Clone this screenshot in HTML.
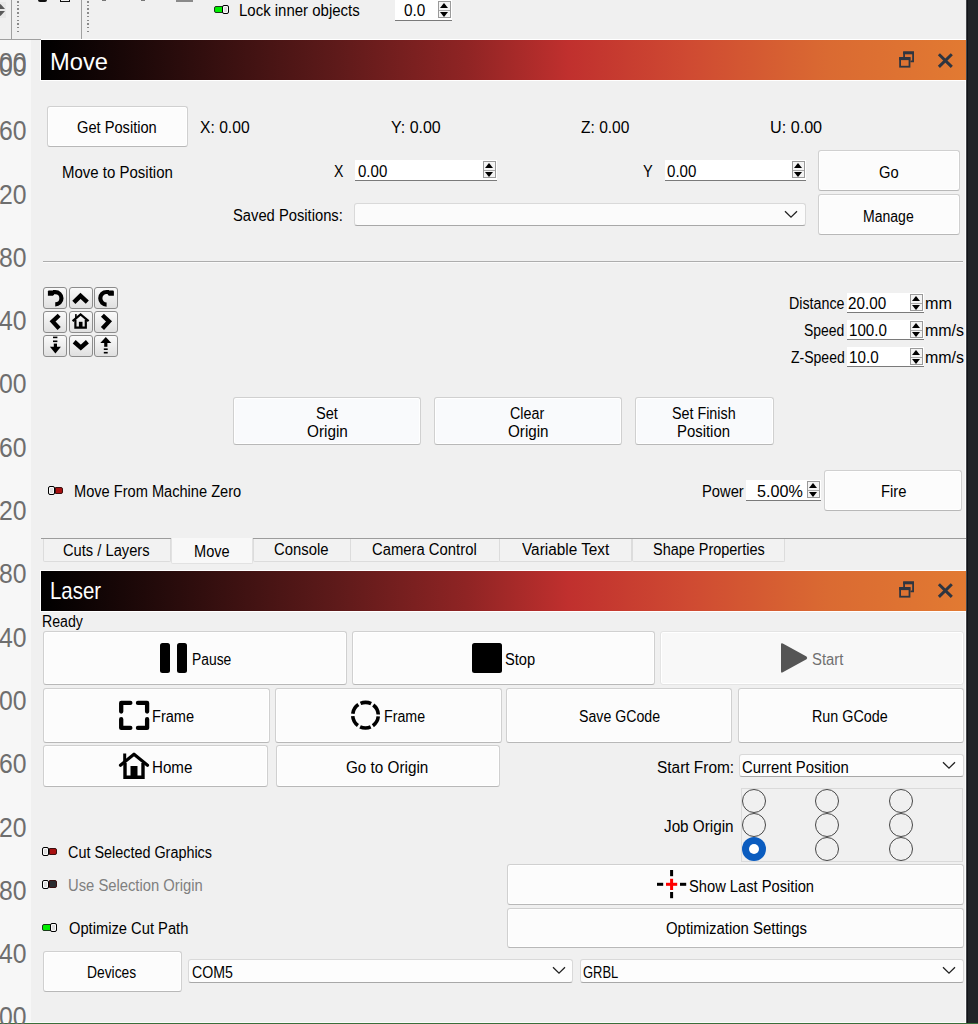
<!DOCTYPE html>
<html><head><meta charset="utf-8">
<style>
*{margin:0;padding:0;box-sizing:border-box}
html,body{width:978px;height:1024px;overflow:hidden;background:#f0f0f0;font-family:"Liberation Sans",sans-serif;color:#000}
.a{position:absolute}
.t{position:absolute;white-space:nowrap;line-height:1;transform-origin:0 0}
.btn{position:absolute;background:#fcfcfc;border:1px solid #d0d0d0;border-bottom-color:#b8b8b8;border-radius:3px;box-shadow:inset 0 0 0 1px #fff}
.title{position:absolute;left:41px;width:925px;height:40px;background:linear-gradient(90deg,#000 0%,#2a0c0c 15%,#5e1a1a 32%,#8f2424 46%,#c0302e 57%,#cf4a32 70%,#da6a32 85%,#e27a32 100%)}
.spin{position:absolute;background:#fff;border-bottom:1px solid #7a7a7a}
.sb{position:absolute;width:13px;height:17px;border:1px solid #9a9a9a;background:#f4f4f4}
.sb:before{content:"";position:absolute;left:0.8px;top:1.1px;border-left:4.7px solid transparent;border-right:4.7px solid transparent;border-bottom:5.8px solid #000}
.sb:after{content:"";position:absolute;left:0.8px;top:9.6px;border-left:4.7px solid transparent;border-right:4.7px solid transparent;border-top:5.8px solid #000}
.sb i{position:absolute;left:0;right:0;top:7.8px;height:1px;background:#a8a8a8}
.combo{position:absolute;background:#fbfbfb;border:1px solid #d9d9d9;border-bottom-color:#a8a8a8;border-radius:3px}
.chev{position:absolute;width:14px;height:9px}
.jb{position:absolute;width:23.5px;height:21.5px;border:1px solid #8c8c8c;border-radius:3px;background:linear-gradient(180deg,#fafafa,#e0e0e0)}
.jb svg{position:absolute;left:-1px;top:-1px}
.rul{position:absolute;right:951px;color:#6e6e6e;font-size:27.5px;line-height:1;transform-origin:100% 0;transform:scaleX(0.9)}
.tab{position:absolute;top:539px;height:23px;background:#f2f2f2;border:1px solid #dcdcdc;border-top:0;border-radius:0 0 2px 2px}
</style></head><body>
<div class="a" style="left:0;top:40px;width:31px;height:984px;background:#f7f7f7"></div>
<div class="a" style="left:966px;top:0;width:12px;height:1024px;background:#222529"></div>
<div class="a" style="left:966px;top:0;width:1px;height:1024px;background:#45474b"></div><div class="a" style="left:967px;top:0;width:1px;height:1024px;background:#121418"></div>
<div class="a" style="left:965px;top:40px;width:1px;height:982px;background:#fbfbfb"></div>
<div class="a" style="left:0;top:1022px;width:966px;height:1px;background:rgba(255,255,255,0.7)"></div>
<div class="a" style="left:0;top:1023px;width:978px;height:1px;background:#3a6e3a"></div>
<div class="rul" style="top:49px">00</div><div class="rul" style="top:52.5px">00</div>
<div class="rul" style="top:117.2px">60</div>
<div class="rul" style="top:180.5px">20</div>
<div class="rul" style="top:243.8px">80</div>
<div class="rul" style="top:307.1px">40</div>
<div class="rul" style="top:370.4px">00</div>
<div class="rul" style="top:433.7px">60</div>
<div class="rul" style="top:497.0px">20</div>
<div class="rul" style="top:560.3px">80</div>
<div class="rul" style="top:623.6px">40</div>
<div class="rul" style="top:686.9px">00</div>
<div class="rul" style="top:750.2px">60</div>
<div class="rul" style="top:813.5px">20</div>
<div class="rul" style="top:876.8px">80</div>
<div class="rul" style="top:940.1px">40</div>
<div class="rul" style="top:1003.4px">00</div>
<div class="a" style="left:0;top:39px;width:41px;height:1px;background:#a0a0a0"></div>
<div class="a" style="left:41px;top:39px;width:925px;height:1px;background:#fff"></div>
<div class="a" style="left:11px;top:0;width:1px;height:39px;background:#a0a0a0"></div>
<div class="a" style="left:81px;top:0;width:1px;height:39px;background:#a0a0a0"></div>
<div class="a" style="left:17px;top:1px;width:2px;height:33px;background:repeating-linear-gradient(180deg,#8a8a8a 0 1.5px,transparent 1.5px 3.7px)"></div>
<div class="a" style="left:87px;top:1px;width:2px;height:33px;background:repeating-linear-gradient(180deg,#8a8a8a 0 1.5px,transparent 1.5px 3.7px)"></div>
<div class="a" style="left:0;top:2px;width:6px;height:16px;background:#e8e8e8"></div>
<svg class="a" style="left:-4px;top:3px" width="10" height="15"><path d="M0 6 L4.5 1 L9 6 Z M0 8 L9 8 L4.5 13 Z" fill="#5a5a5a"/></svg>
<div class="a" style="left:38px;top:0;width:9px;height:1.5px;background:#111;border-radius:0 0 4px 4px"></div>
<div class="a" style="left:60px;top:0;width:10px;height:2px;border:1.3px solid #111;border-top:0"></div>
<div class="a" style="left:102px;top:0;width:4px;height:1px;background:#777"></div>
<div class="a" style="left:141px;top:0;width:4px;height:1px;background:#777"></div>
<div class="a" style="left:176px;top:0;width:17px;height:1.5px;background:#8a8a8a"></div>
<div class="a" style="left:214px;top:5.5px;width:8.5px;height:7.5px;background:#00ee00;border:1px solid #1a3a1a;border-radius:2px 0 0 2px"></div>
<div class="a" style="left:221.5px;top:4.7px;width:7.3px;height:9.2px;background:#dedede;border:1.5px solid #000;border-radius:2px;box-shadow:inset 0 0 0 1px #fafafa"></div>
<div class="spin" style="left:395px;top:0;width:57px;height:21px"></div>
<div class="sb" style="left:438px;top:1px;height:17px"><i></i></div>
<div class="title" style="top:40px"></div>
<div class="a" style="left:40px;top:80px;width:926px;height:1px;background:#fff"></div><div class="a" style="left:40px;top:40px;width:1px;height:40px;background:#fff"></div>
<div class="btn" style="left:47px;top:106px;width:141px;height:41px"></div>
<div class="spin" style="left:355px;top:160px;width:142px;height:21px"></div>
<div class="sb" style="left:483px;top:161px"><i></i></div>
<div class="spin" style="left:665px;top:160px;width:141px;height:21px"></div>
<div class="sb" style="left:792px;top:161px"><i></i></div>
<div class="btn" style="left:818px;top:150px;width:142px;height:41px"></div>
<div class="combo" style="left:354px;top:203px;width:452px;height:23px"></div>
<svg class="a" style="left:784px;top:210px" width="14" height="9" viewBox="0 0 14 9"><path d="M1 1.2 L7 7.2 L13 1.2" fill="none" stroke="#222" stroke-width="1.3"/></svg>
<div class="btn" style="left:818px;top:194px;width:142px;height:41px"></div>
<div class="a" style="left:43px;top:260.5px;width:920px;height:1.2px;background:#adadad"></div>
<div class="a" style="left:43px;top:261.7px;width:920px;height:1px;background:#fafafa"></div>
<div class="jb" style="left:43px;top:287px"><svg width="24" height="22" viewBox="0 0 24 22"><path d="M12.25 17.45 A6.2 6.2 0 0 0 12.25 5.05 H10" fill="none" stroke="#000" stroke-width="4.2"/><path d="M4.9 4.4 L5.5 3.5 H11 V7.6 L10 8.7 H4.9 Z" fill="#000"/></svg></div>
<div class="jb" style="left:69px;top:287px"><svg width="24" height="22" viewBox="0 0 24 22"><path d="M4.85 15.35 L11.5 8.9 L18.3 15.1" fill="none" stroke="#000" stroke-width="4.5"/></svg></div>
<div class="jb" style="left:94px;top:287px"><svg width="24" height="22" viewBox="0 0 24 22"><path d="M12.6 17.6 A6.3 6.3 0 0 1 12.6 5.0 H15" fill="none" stroke="#000" stroke-width="4.2"/><path d="M19.9 4.4 L19.3 3.5 H13.8 V7.6 L14.8 8.7 H19.9 Z" fill="#000"/></svg></div>
<div class="jb" style="left:43px;top:311px"><svg width="24" height="22" viewBox="0 0 24 22"><path d="M16.15 4.3 L9.6 10.4 L16.15 17.5" fill="none" stroke="#000" stroke-width="4.3"/></svg></div>
<div class="jb" style="left:69px;top:311px"><svg width="24" height="22" viewBox="0 0 24 22"><path d="M3.6 10.2 L11.6 3.4 L19.6 10.2" fill="none" stroke="#000" stroke-width="2.2"/><rect x="6.1" y="3.1" width="1.6" height="4.5" fill="#000"/><path d="M6.4 8.8 V16.6 H16.8 V8.8" fill="none" stroke="#000" stroke-width="2.2"/><rect x="9.9" y="10.8" width="3.6" height="6" fill="#000"/></svg></div>
<div class="jb" style="left:94px;top:311px"><svg width="24" height="22" viewBox="0 0 24 22"><path d="M8.45 4.3 L15.0 10.4 L8.45 17.5" fill="none" stroke="#000" stroke-width="4.3"/></svg></div>
<div class="jb" style="left:43px;top:335px"><svg width="24" height="22" viewBox="0 0 24 22"><rect x="10" y="1.6" width="4.4" height="1.6" fill="#000"/><rect x="10" y="5.5" width="4.4" height="1.6" fill="#000"/><rect x="10.8" y="8.6" width="3.2" height="3.6" fill="#000"/><path d="M6.9 11.8 H17.9 L12.4 18.5 Z" fill="#000"/></svg></div>
<div class="jb" style="left:69px;top:335px"><svg width="24" height="22" viewBox="0 0 24 22"><path d="M5.2 6.8 L11.8 12.6 L18.4 6.8" fill="none" stroke="#000" stroke-width="4.5"/></svg></div>
<div class="jb" style="left:94px;top:335px"><svg width="24" height="22" viewBox="0 0 24 22"><path d="M6.3 7.9 H17.3 L11.8 2 Z" fill="#000"/><rect x="10.2" y="7.6" width="3.2" height="4.2" fill="#000"/><rect x="9.8" y="13.4" width="3.9" height="1.6" fill="#000"/><rect x="9.8" y="16.9" width="3.9" height="1.6" fill="#000"/></svg></div>
<div class="spin" style="left:847px;top:293px;width:77px;height:20px"></div>
<div class="sb" style="left:910px;top:294px"><i></i></div>
<div class="spin" style="left:847px;top:320px;width:77px;height:20px"></div>
<div class="sb" style="left:910px;top:321px"><i></i></div>
<div class="spin" style="left:847px;top:347px;width:77px;height:20px"></div>
<div class="sb" style="left:910px;top:348px"><i></i></div>
<div class="btn" style="left:233px;top:397px;width:188px;height:48px;background:#f9fafc"></div>
<div class="btn" style="left:434px;top:397px;width:188px;height:48px;background:#f9fafc"></div>
<div class="btn" style="left:635px;top:397px;width:139px;height:48px;background:#f9fafc"></div>
<div class="a" style="left:54.5px;top:486.7px;width:8.5px;height:7.5px;background:#a81010;border:1px solid #3a1010;border-radius:0 2px 2px 0"></div>
<div class="a" style="left:48px;top:485.9px;width:7px;height:9.2px;background:#dedede;border:1.5px solid #000;border-radius:2px;box-shadow:inset 0 0 0 1px #fafafa"></div>
<div class="spin" style="left:746px;top:480px;width:75px;height:21px"></div>
<div class="sb" style="left:807px;top:481px"><i></i></div>
<div class="btn" style="left:824px;top:470px;width:138px;height:41px"></div>
<div class="a" style="left:41px;top:538px;width:925px;height:1px;background:#9c9c9c"></div>
<div class="tab" style="left:43px;width:128px"></div>
<div class="tab" style="left:253px;width:98px"></div>
<div class="tab" style="left:350px;width:150px"></div>
<div class="tab" style="left:499px;width:133px"></div>
<div class="tab" style="left:632px;width:153px"></div>
<div class="a" style="left:171px;top:538px;width:82px;height:26px;background:#f8f8f8;border:1px solid #e2e2e2;border-top:0;border-radius:0 0 2px 2px"></div>
<div class="a" style="left:40px;top:570px;width:926px;height:42px;background:#fff"></div>
<div class="title" style="top:571px"></div>
<div class="btn" style="left:43px;top:631px;width:304px;height:54px"></div>
<div class="a" style="left:160px;top:643px;width:10px;height:30px;background:#000;border-radius:2.5px"></div>
<div class="a" style="left:177px;top:643px;width:10px;height:30px;background:#000;border-radius:2.5px"></div>
<div class="btn" style="left:352px;top:631px;width:303px;height:54px"></div>
<div class="a" style="left:472px;top:643px;width:29.5px;height:30px;background:#000;border-radius:2.5px"></div>
<div class="btn" style="left:660px;top:631px;width:304px;height:54px;background:#f8f8f8;border-color:#e4e4e4"></div>
<svg class="a" style="left:780px;top:642px" width="29" height="32" viewBox="0 0 29 32"><path d="M1 2.5 Q1 0.5 2.8 1.5 L26.5 14.5 Q28 15.9 26.5 17.3 L2.8 30.3 Q1 31.3 1 29.3 Z" fill="#555"/></svg>
<div class="btn" style="left:43px;top:688px;width:227px;height:55px"></div>
<svg class="a" style="left:118px;top:700px" width="32" height="31" viewBox="0 0 32 31"><path d="M3.2 11.6 V2.9 H12.35 M19.95 2.9 H29.1 V11.6 M29.1 19.2 V27.9 H19.95 M12.35 27.9 H3.2 V19.2" fill="none" stroke="#000" stroke-width="4.3" stroke-linecap="round" stroke-linejoin="round"/></svg>
<div class="btn" style="left:275px;top:688px;width:227px;height:55px"></div>
<svg class="a" style="left:350px;top:700px" width="31" height="31" viewBox="0 0 31 31"><circle cx="15.5" cy="15.2" r="12.8" fill="none" stroke="#000" stroke-width="3.6" stroke-dasharray="10.9 2.5" stroke-dashoffset="-1.25"/></svg>
<div class="btn" style="left:506px;top:688px;width:226px;height:55px"></div>
<div class="btn" style="left:738px;top:688px;width:226px;height:55px"></div>
<div class="btn" style="left:43px;top:745px;width:225px;height:42px"></div>
<svg class="a" style="left:118px;top:752px" width="32" height="28" viewBox="0 0 32 28"><path d="M2.5 13.2 L16 2.2 L29.5 13.2" fill="none" stroke="#000" stroke-width="3.2" stroke-linecap="round" stroke-linejoin="round"/><rect x="5.2" y="1.5" width="3" height="9" fill="#000"/><path d="M7 11 V25.3 H25 V11" fill="none" stroke="#000" stroke-width="3.4"/><rect x="12.5" y="14" width="7" height="12" fill="#000"/></svg>
<div class="btn" style="left:276px;top:745px;width:224px;height:42px"></div>
<div class="combo" style="left:739px;top:754px;width:225px;height:23px;background:#fdfdfd"></div>
<svg class="a" style="left:942px;top:761px" width="14" height="9" viewBox="0 0 14 9"><path d="M1 1.2 L7 7.2 L13 1.2" fill="none" stroke="#222" stroke-width="1.3"/></svg>
<div class="a" style="left:741px;top:788px;width:222px;height:74px;border:1px solid #dadada"></div>
<div class="a" style="left:742px;top:788.5px;width:24px;height:24px;border-radius:50%;border:1.8px solid #474747"></div>
<div class="a" style="left:815px;top:788.5px;width:24px;height:24px;border-radius:50%;border:1.8px solid #474747"></div>
<div class="a" style="left:889px;top:788.5px;width:24px;height:24px;border-radius:50%;border:1.8px solid #474747"></div>
<div class="a" style="left:742px;top:813px;width:24px;height:24px;border-radius:50%;border:1.8px solid #474747"></div>
<div class="a" style="left:815px;top:813px;width:24px;height:24px;border-radius:50%;border:1.8px solid #474747"></div>
<div class="a" style="left:889px;top:813px;width:24px;height:24px;border-radius:50%;border:1.8px solid #474747"></div>
<div class="a" style="left:742px;top:837.3px;width:24px;height:24px;border-radius:50%;background:#0b5cbf"><div class="a" style="left:7px;top:7px;width:10px;height:10px;border-radius:50%;background:#fff"></div></div>
<div class="a" style="left:815px;top:837.3px;width:24px;height:24px;border-radius:50%;border:1.8px solid #474747"></div>
<div class="a" style="left:889px;top:837.3px;width:24px;height:24px;border-radius:50%;border:1.8px solid #474747"></div>
<div class="a" style="left:48.5px;top:847.5999999999999px;width:8.5px;height:7.5px;background:#a81010;border:1px solid #3a1010;border-radius:0 2px 2px 0"></div>
<div class="a" style="left:42px;top:846.8px;width:7px;height:9.2px;background:#dedede;border:1.5px solid #000;border-radius:2px;box-shadow:inset 0 0 0 1px #fafafa"></div>
<div class="a" style="left:48.5px;top:880.4px;width:8.5px;height:7.5px;background:#2a2c30;border:1px solid #3a1010;border-radius:0 2px 2px 0"></div>
<div class="a" style="left:42px;top:879.6px;width:7px;height:9.2px;background:#dedede;border:1.5px solid #000;border-radius:2px;box-shadow:inset 0 0 0 1px #fafafa"></div>
<div class="a" style="left:42px;top:923.8px;width:8.5px;height:7.5px;background:#00ee00;border:1px solid #1a3a1a;border-radius:2px 0 0 2px"></div>
<div class="a" style="left:49.5px;top:923px;width:7.3px;height:9.2px;background:#dedede;border:1.5px solid #000;border-radius:2px;box-shadow:inset 0 0 0 1px #fafafa"></div>
<div class="btn" style="left:507px;top:864px;width:457px;height:41px"></div>
<svg class="a" style="left:656px;top:869px" width="31" height="30" viewBox="0 0 31 30"><g fill="#000"><rect x="1" y="13.8" width="6.2" height="3"/><rect x="24" y="13.8" width="6.2" height="3"/><rect x="14.1" y="1" width="3" height="6.2"/><rect x="14.1" y="23" width="3" height="6.2"/></g><g fill="#f00"><rect x="10" y="13.8" width="11.2" height="3"/><rect x="14.1" y="9.8" width="3" height="11.2"/></g></svg>
<div class="btn" style="left:507px;top:908px;width:457px;height:40px"></div>
<div class="btn" style="left:43px;top:951px;width:139px;height:41px"></div>
<div class="combo" style="left:188px;top:959px;width:385px;height:24px;background:#fdfdfd"></div>
<svg class="a" style="left:552px;top:966px" width="14" height="9" viewBox="0 0 14 9"><path d="M1 1.2 L7 7.2 L13 1.2" fill="none" stroke="#222" stroke-width="1.3"/></svg>
<div class="combo" style="left:580px;top:959px;width:384px;height:24px;background:#fdfdfd"></div>
<svg class="a" style="left:942px;top:966px" width="14" height="9" viewBox="0 0 14 9"><path d="M1 1.2 L7 7.2 L13 1.2" fill="none" stroke="#222" stroke-width="1.3"/></svg>
<svg class="a" style="left:896px;top:48px" width="60" height="25" viewBox="0 0 60 25"><path d="M8.1 9.1 V4.4 H17.1 V13.4 H14.4" fill="none" stroke="#2e3540" stroke-width="1.8"/><rect x="7.2" y="3.5" width="10.8" height="2.8" fill="#2e3540"/><rect x="4.1" y="10" width="9.4" height="8.7" fill="none" stroke="#2e3540" stroke-width="1.8"/><rect x="3.2" y="9.1" width="11.2" height="3" fill="#2e3540"/><path d="M42.9 6.3 L55.8 18.9 M55.8 6.3 L42.9 18.9" stroke="#2e3540" stroke-width="3"/></svg>
<svg class="a" style="left:896px;top:578px" width="60" height="25" viewBox="0 0 60 25"><path d="M8.1 9.1 V4.4 H17.1 V13.4 H14.4" fill="none" stroke="#2e3540" stroke-width="1.8"/><rect x="7.2" y="3.5" width="10.8" height="2.8" fill="#2e3540"/><rect x="4.1" y="10" width="9.4" height="8.7" fill="none" stroke="#2e3540" stroke-width="1.8"/><rect x="3.2" y="9.1" width="11.2" height="3" fill="#2e3540"/><path d="M42.9 6.3 L55.8 18.9 M55.8 6.3 L42.9 18.9" stroke="#2e3540" stroke-width="3"/></svg>
<div class="t" style="left:238.86px;top:3.4px;font-size:16px;color:#000;transform:scaleX(0.9359);">Lock inner objects</div>
<div class="t" style="left:404.4px;top:3.0px;font-size:16px;color:#000;transform:scaleX(0.9591);">0.0</div>
<div class="t" style="left:49.79px;top:50.54px;font-size:23.6px;color:#fff;transform:scaleX(1.0036);">Move</div>
<div class="t" style="left:77.28px;top:120.2px;font-size:16px;color:#000;transform:scaleX(0.9151);">Get Position</div>
<div class="t" style="left:200.4px;top:120.3px;font-size:16px;color:#000;transform:scaleX(0.978);">X: 0.00</div>
<div class="t" style="left:391.0px;top:120.3px;font-size:16px;color:#000;transform:scaleX(0.998);">Y: 0.00</div>
<div class="t" style="left:581.2px;top:120.3px;font-size:16px;color:#000;transform:scaleX(0.972);">Z: 0.00</div>
<div class="t" style="left:769.79px;top:120.3px;font-size:16px;color:#000;transform:scaleX(1.01);">U: 0.00</div>
<div class="t" style="left:61.66px;top:164.6px;font-size:16px;color:#000;transform:scaleX(0.9368);">Move to Position</div>
<div class="t" style="left:334.4px;top:164.3px;font-size:16px;color:#000;transform:scaleX(0.88);">X</div>
<div class="t" style="left:357.7px;top:164.0px;font-size:16px;color:#000;transform:scaleX(0.9387);">0.00</div>
<div class="t" style="left:642.9px;top:164.3px;font-size:16px;color:#000;transform:scaleX(0.91);">Y</div>
<div class="t" style="left:666.8px;top:164.0px;font-size:16px;color:#000;transform:scaleX(0.9419);">0.00</div>
<div class="t" style="left:879.08px;top:165.0px;font-size:16px;color:#000;transform:scaleX(0.92);">Go</div>
<div class="t" style="left:233.38px;top:208.4px;font-size:16px;color:#000;transform:scaleX(0.9214);">Saved Positions:</div>
<div class="t" style="left:862.82px;top:208.6px;font-size:16px;color:#000;transform:scaleX(0.8772);">Manage</div>
<div class="t" style="left:788.81px;top:295.8px;font-size:16px;color:#000;transform:scaleX(0.8918);">Distance</div>
<div class="t" style="left:848.4px;top:295.7px;font-size:16px;color:#000;transform:scaleX(0.9525);">20.00</div>
<div class="t" style="left:924.69px;top:295.8px;font-size:16px;color:#000;transform:scaleX(1.012);">mm</div>
<div class="t" style="left:804.03px;top:322.9px;font-size:16px;color:#000;transform:scaleX(0.8711);">Speed</div>
<div class="t" style="left:848.65px;top:322.9px;font-size:16px;color:#000;transform:scaleX(0.9462);">100.0</div>
<div class="t" style="left:924.7px;top:322.9px;font-size:16px;color:#000;transform:scaleX(0.9974);">mm/s</div>
<div class="t" style="left:790.7px;top:350.2px;font-size:16px;color:#000;transform:scaleX(0.8754);">Z-Speed</div>
<div class="t" style="left:848.65px;top:350.2px;font-size:16px;color:#000;transform:scaleX(0.95);">10.0</div>
<div class="t" style="left:924.7px;top:350.2px;font-size:16px;color:#000;transform:scaleX(0.9974);">mm/s</div>
<div class="t" style="left:316.29px;top:405.8px;font-size:16px;color:#000;transform:scaleX(0.913);">Set</div>
<div class="t" style="left:306.8px;top:423.6px;font-size:16px;color:#000;transform:scaleX(0.9571);">Origin</div>
<div class="t" style="left:510.41px;top:405.9px;font-size:16px;color:#000;transform:scaleX(0.8946);">Clear</div>
<div class="t" style="left:507.6px;top:423.7px;font-size:16px;color:#000;transform:scaleX(0.95);">Origin</div>
<div class="t" style="left:671.71px;top:405.9px;font-size:16px;color:#000;transform:scaleX(0.8943);">Set Finish</div>
<div class="t" style="left:676.97px;top:423.7px;font-size:16px;color:#000;transform:scaleX(0.9309);">Position</div>
<div class="t" style="left:73.69px;top:483.9px;font-size:16px;color:#000;transform:scaleX(0.9126);">Move From Machine Zero</div>
<div class="t" style="left:702.48px;top:483.8px;font-size:16px;color:#000;transform:scaleX(0.9205);">Power</div>
<div class="t" style="left:756.99px;top:483.8px;font-size:16px;color:#000;transform:scaleX(1.0091);">5.00%</div>
<div class="t" style="left:880.88px;top:483.8px;font-size:16px;color:#000;transform:scaleX(0.9231);">Fire</div>
<div class="t" style="left:63.48px;top:542.7px;font-size:16px;color:#000;transform:scaleX(0.9183);">Cuts / Layers</div>
<div class="t" style="left:194.29px;top:544.4px;font-size:16px;color:#000;transform:scaleX(0.9105);">Move</div>
<div class="t" style="left:273.57px;top:542.4px;font-size:16px;color:#000;transform:scaleX(0.9281);">Console</div>
<div class="t" style="left:371.87px;top:542.4px;font-size:16px;color:#000;transform:scaleX(0.927);">Camera Control</div>
<div class="t" style="left:521.5px;top:542.4px;font-size:16px;color:#000;transform:scaleX(0.9593);">Variable Text</div>
<div class="t" style="left:652.8px;top:542.4px;font-size:16px;color:#000;transform:scaleX(0.9033);">Shape Properties</div>
<div class="t" style="left:50.27px;top:580.34px;font-size:23.6px;color:#fff;transform:scaleX(0.8649);">Laser</div>
<div class="t" style="left:41.92px;top:613.8px;font-size:16px;color:#000;transform:scaleX(0.8844);">Ready</div>
<div class="t" style="left:191.83px;top:652.3px;font-size:16px;color:#000;transform:scaleX(0.8659);">Pause</div>
<div class="t" style="left:504.98px;top:652.0px;font-size:16px;color:#000;transform:scaleX(0.9156);">Stop</div>
<div class="t" style="left:812.47px;top:652.0px;font-size:16px;color:#707070;transform:scaleX(0.9273);">Start</div>
<div class="t" style="left:152.29px;top:709.2px;font-size:16px;color:#000;transform:scaleX(0.9111);">Frame</div>
<div class="t" style="left:384.21px;top:709.4px;font-size:16px;color:#000;transform:scaleX(0.8889);">Frame</div>
<div class="t" style="left:578.72px;top:709.2px;font-size:16px;color:#000;transform:scaleX(0.8844);">Save GCode</div>
<div class="t" style="left:812.4px;top:709.2px;font-size:16px;color:#000;transform:scaleX(0.8952);">Run GCode</div>
<div class="t" style="left:152.25px;top:759.9px;font-size:16px;color:#000;transform:scaleX(0.9463);">Home</div>
<div class="t" style="left:345.65px;top:759.9px;font-size:16px;color:#000;transform:scaleX(0.9541);">Go to Origin</div>
<div class="t" style="left:656.54px;top:760.0px;font-size:16px;color:#000;transform:scaleX(0.9641);">Start From:</div>
<div class="t" style="left:742.47px;top:759.6px;font-size:16px;color:#000;transform:scaleX(0.931);">Current Position</div>
<div class="t" style="left:663.7px;top:818.7px;font-size:16px;color:#000;transform:scaleX(0.9542);">Job Origin</div>
<div class="t" style="left:67.6px;top:845.0px;font-size:16px;color:#000;transform:scaleX(0.8994);">Cut Selected Graphics</div>
<div class="t" style="left:67.58px;top:878.3px;font-size:16px;color:#7f7f7f;transform:scaleX(0.9236);">Use Selection Origin</div>
<div class="t" style="left:69.0px;top:920.9px;font-size:16px;color:#000;transform:scaleX(0.9194);">Optimize Cut Path</div>
<div class="t" style="left:689.08px;top:878.5px;font-size:16px;color:#000;transform:scaleX(0.9185);">Show Last Position</div>
<div class="t" style="left:665.6px;top:921.4px;font-size:16px;color:#000;transform:scaleX(0.9325);">Optimization Settings</div>
<div class="t" style="left:86.84px;top:965.4px;font-size:16px;color:#000;transform:scaleX(0.8643);">Devices</div>
<div class="t" style="left:191.72px;top:964.7px;font-size:16px;color:#000;transform:scaleX(0.8844);">COM5</div>
<div class="t" style="left:582.99px;top:965.0px;font-size:16px;color:#000;transform:scaleX(0.8093);">GRBL</div>
</body></html>
